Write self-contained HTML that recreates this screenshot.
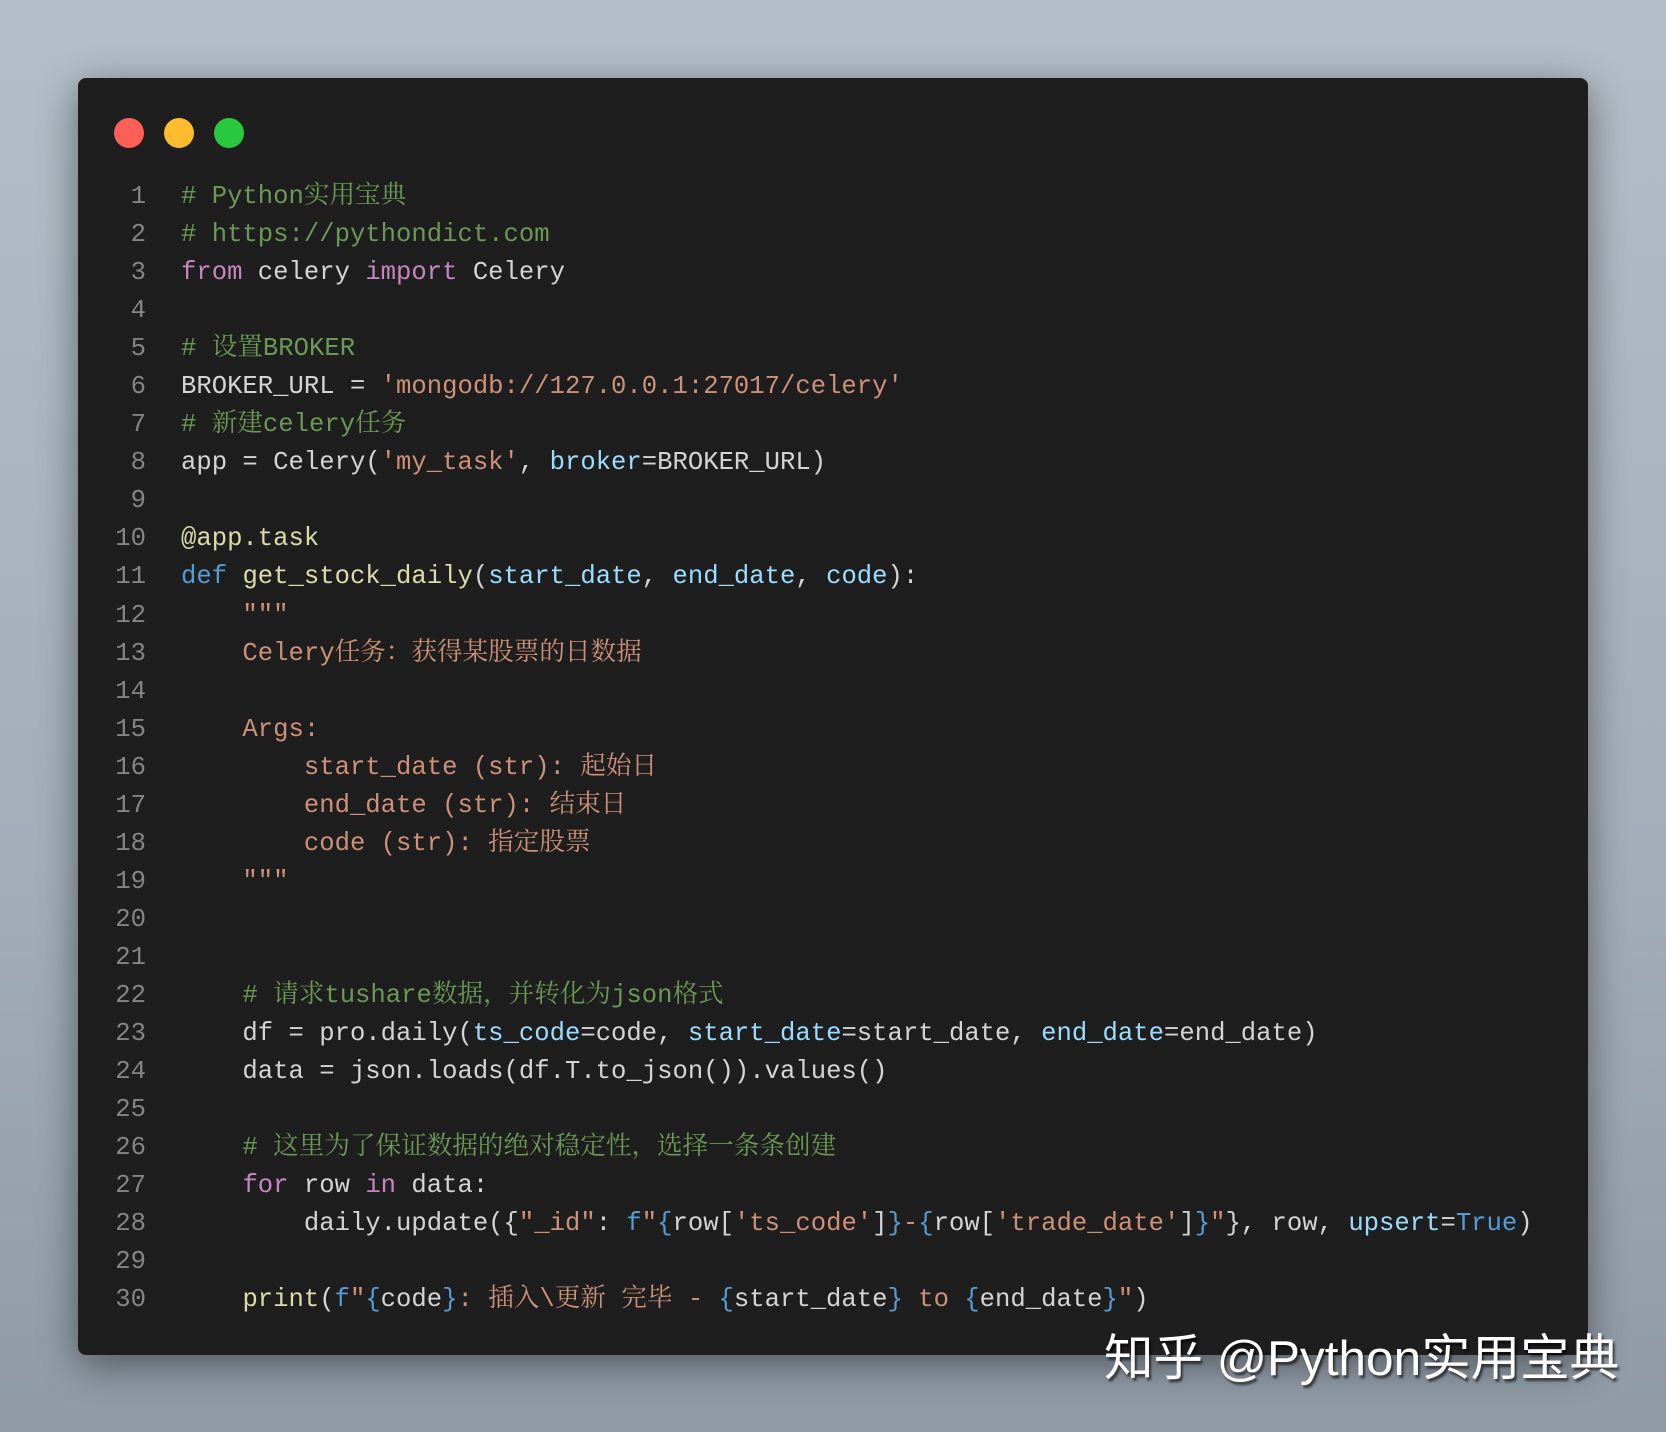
<!DOCTYPE html>
<html><head><meta charset="utf-8"><style>
html,body{margin:0;padding:0;width:1666px;height:1432px;overflow:hidden;}
body{background:linear-gradient(180deg,#b4bec8 0%,#a3aeb9 60%,#8f9aa5 100%);position:relative;font-family:"Liberation Mono","Noto Serif CJK SC",monospace;}
.win{position:absolute;left:78px;top:78px;width:1510px;height:1277px;background:#1e1e1e;border-radius:8px;box-shadow:0 10px 40px rgba(0,0,0,.45);}
.dot{position:absolute;top:118px;width:30px;height:30px;border-radius:50%;}
.code{position:absolute;top:178px;left:0;font-size:25.6px;line-height:38.05px;white-space:pre;color:#d4d4d4;}
.ln{position:absolute;top:178px;left:100px;width:46px;text-align:right;font-size:25.6px;line-height:38.05px;white-space:pre;color:#858585;}
.c{color:#6a9955}.k{color:#c586c0}.s{color:#ce9178}.f{color:#dcdcaa}.p{color:#9cdcfe}.d{color:#569cd6}
.wm{position:absolute;left:1104px;top:1328px;font-family:"Liberation Sans","Noto Sans CJK SC",sans-serif;font-size:49.5px;color:#fff;text-shadow:2px 3px 2px rgba(0,0,0,.6);white-space:nowrap;line-height:62px;}
</style></head><body>
<div class="win"></div>
<div class="dot" style="left:114px;background:#fe5f57"></div>
<div class="dot" style="left:164px;background:#febc2e"></div>
<div class="dot" style="left:214px;background:#28c840"></div>
<div class="ln">1
2
3
4
5
6
7
8
9
10
11
12
13
14
15
16
17
18
19
20
21
22
23
24
25
26
27
28
29
30</div>
<div class="code" style="left:181px"><span class="c"># Python实用宝典</span>
<span class="c"># https://pythondict.com</span>
<span class="k">from</span> celery <span class="k">import</span> Celery

<span class="c"># 设置BROKER</span>
BROKER_URL = <span class="s">'mongodb://127.0.0.1:27017/celery'</span>
<span class="c"># 新建celery任务</span>
app = Celery(<span class="s">'my_task'</span>, <span class="p">broker</span>=BROKER_URL)

<span class="f">@app.task</span>
<span class="d">def</span> <span class="f">get_stock_daily</span>(<span class="p">start_date</span>, <span class="p">end_date</span>, <span class="p">code</span>):
<span class="s">    """
    Celery任务：获得某股票的日数据

    Args:
        start_date (str): 起始日
        end_date (str): 结束日
        code (str): 指定股票
    """</span>


    <span class="c"># 请求tushare数据，并转化为json格式</span>
    df = pro.daily(<span class="p">ts_code</span>=code, <span class="p">start_date</span>=start_date, <span class="p">end_date</span>=end_date)
    data = json.loads(df.T.to_json()).values()

    <span class="c"># 这里为了保证数据的绝对稳定性，选择一条条创建</span>
    <span class="k">for</span> row <span class="k">in</span> data:
        daily.update({<span class="s">"_id"</span>: <span class="d">f</span><span class="s">"</span><span class="d">{</span>row[<span class="s">'ts_code'</span>]<span class="d">}</span><span class="s">-</span><span class="d">{</span>row[<span class="s">'trade_date'</span>]<span class="d">}</span><span class="s">"</span>}, row, <span class="p">upsert</span>=<span class="d">True</span>)

    <span class="f">print</span>(<span class="d">f</span><span class="s">"</span><span class="d">{</span>code<span class="d">}</span><span class="s">: 插入\更新 完毕 - </span><span class="d">{</span>start_date<span class="d">}</span><span class="s"> to </span><span class="d">{</span>end_date<span class="d">}</span><span class="s">"</span>)</div>
<div class="wm">知乎 @Python实用宝典</div>
</body></html>
